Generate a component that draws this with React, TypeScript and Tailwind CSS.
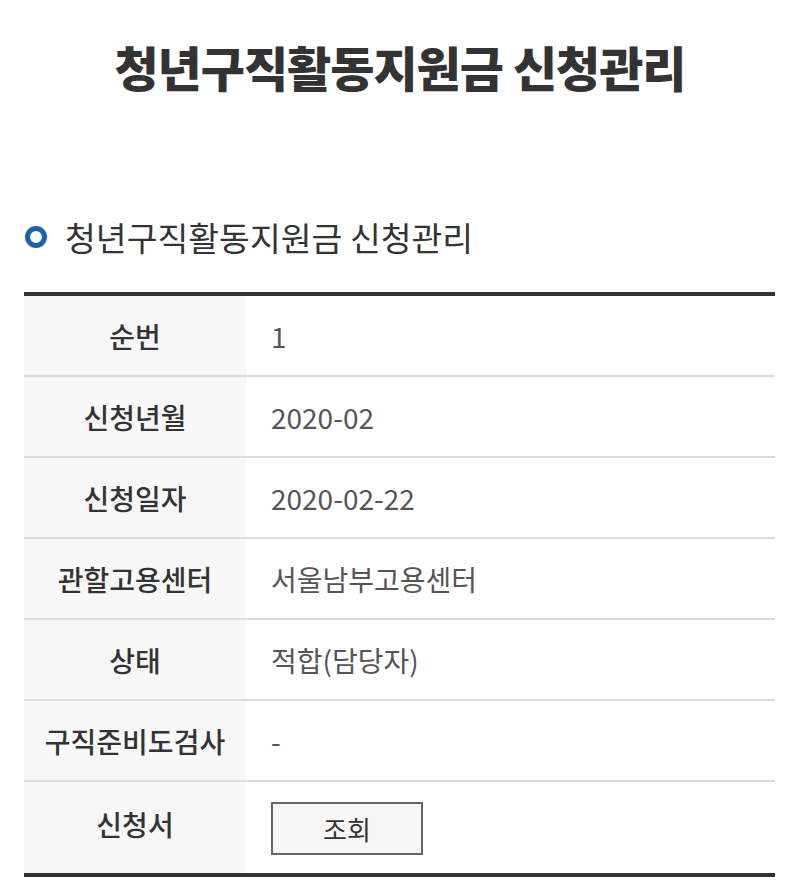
import React from "react"

const rows: { label: string; value: string }[] = [
    { label: "순번", value: "1" },
    { label: "신청년월", value: "2020-02" },
    { label: "신청일자", value: "2020-02-22" },
    { label: "관할고용센터", value: "서울남부고용센터" },
    { label: "상태", value: "적합(담당자)" },
    { label: "구직준비도검사", value: "-" },
]

export default function App() {
    return (
        <div
            className="min-h-[889px] w-[800px] bg-white text-[#333]"
            style={{ fontFamily: '"Noto Sans CJK KR", "Noto Sans", sans-serif' }}
        >
            {/* 상단 타이틀 */}
            <div className="flex h-[136px] items-center justify-center pb-[4px]">
                <h1 className="text-[48px] font-black leading-none tracking-[-1px] text-[#333]">
                    청년구직활동지원금 신청관리
                </h1>
            </div>

            <div className="px-[24px] pt-[76px]">
                {/* 섹션 제목 */}
                <div className="flex h-[50px] items-center gap-[18px]">
                    <span className="ml-[1px] block h-[22px] w-[22px] rounded-full border-[5px] border-[#1b62ab]" />
                    <h2 className="text-[33.5px] font-normal leading-none text-[#333]">
                        청년구직활동지원금 신청관리
                    </h2>
                </div>

                {/* 상세 테이블 */}
                <div className="mt-[30px] w-[751px] border-y-4 border-[#333]">
                    {rows.map((row) => (
                        <div key={row.label} className="flex h-[81px] border-b-2 border-[#dcdcdc]">
                            <div className="flex w-[222px] items-center justify-center bg-[#f7f7f7] text-[28px] font-medium text-[#333]">
                                {row.label}
                            </div>
                            <div className="flex flex-1 items-center pl-[25px] text-[28px] text-[#555]">
                                {row.value}
                            </div>
                        </div>
                    ))}
                    <div className="flex h-[91px]">
                        <div className="flex w-[222px] items-center justify-center bg-[#f7f7f7] pb-[8px] text-[28px] font-medium text-[#333]">
                            신청서
                        </div>
                        <div className="flex flex-1 items-center pl-[25px] pt-[2px]">
                            <button className="flex h-[53px] w-[152px] items-center justify-center border-2 border-[#666] bg-[#f6f6f6] text-[26px] text-[#333]">
                                조회
                            </button>
                        </div>
                    </div>
                </div>
            </div>
        </div>
    )
}
